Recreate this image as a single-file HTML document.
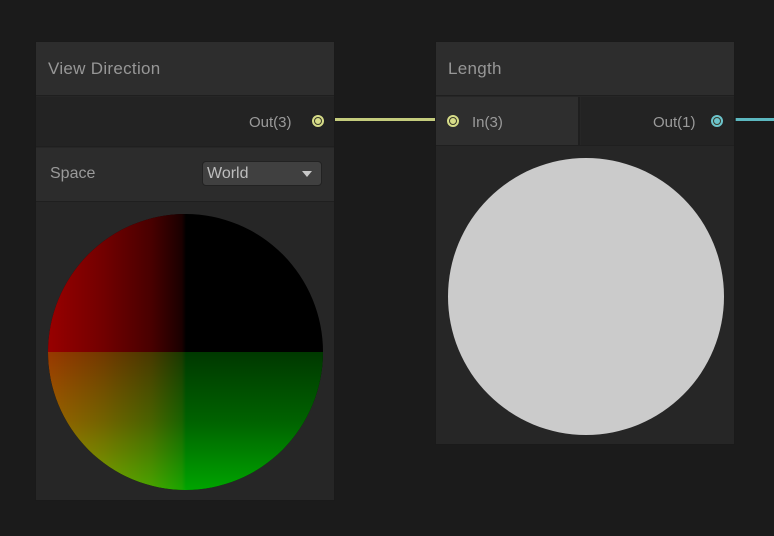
<!DOCTYPE html>
<html><head><style>
*{margin:0;padding:0;box-sizing:border-box}
body{width:774px;height:536px;background:#1b1b1b;position:relative;overflow:hidden;font-family:"Liberation Sans",sans-serif;}
.abs{position:absolute}
.node{position:absolute;background:#262626;border:1px solid #1a1a1a}
.title{position:absolute;left:0;top:0;right:0;height:54px;background:#2d2d2d;border-bottom:1px solid #1f1f1f;color:#979797;font-size:17px;line-height:54px;padding-left:12px;letter-spacing:.3px}
.txt{color:#9a9a9a;font-size:15px;position:absolute}
.port{position:absolute;width:12px;height:12px;border-radius:50%;border:2px solid;}
.port::after{content:"";position:absolute;left:0px;top:0px;width:8px;height:8px;border-radius:50%;border:1.5px solid #3a3a2a;box-sizing:border-box}
</style></head><body>
<!-- wires -->
<div class="abs" style="left:323px;top:118px;width:12px;height:3px;background:#4f5236"></div>
<div class="abs" style="left:335px;top:118px;width:100px;height:3px;background:#c4cc7d"></div>
<div class="abs" style="left:435px;top:118px;width:12px;height:3px;background:#4f5236"></div>
<div class="abs" style="left:722px;top:118px;width:14px;height:3px;background:#2f4a4c"></div>
<div class="abs" style="left:736px;top:118px;width:38px;height:3px;background:#5cb8c0"></div>

<!-- node 1 -->
<div class="node" style="left:35px;top:41px;width:300px;height:460px">
 <div class="title">View Direction</div>
 <div class="abs" style="left:0;top:55px;right:0;height:50px;background:#232323;border-bottom:1px solid #1f1f1f"></div>
 <div class="txt" style="left:213px;top:72px">Out(3)</div>
 <div class="port" style="left:276px;top:73px;border-color:#d6dc88;background:#d6dc88"></div>
 <div class="abs" style="left:0;top:106px;right:0;height:54px;background:#2c2c2c;border-bottom:1px solid #1f1f1f"></div>
 <div class="txt" style="left:14px;top:123px;font-size:16px">Space</div>
 <div class="abs" style="left:166px;top:119px;width:120px;height:25px;background:#404040;border:1px solid #222;border-radius:4px;color:#bdbdbd;font-size:16px;line-height:23px;padding-left:4px">World</div>
 <div class="abs" style="left:266px;top:129px;width:0;height:0;border-left:5px solid transparent;border-right:5px solid transparent;border-top:6px solid #c8c8c8"></div>
 <div class="abs" style="left:12px;top:172px;width:275px;height:276px;border-radius:50%;overflow:hidden;background:#000;isolation:isolate">
  <div class="abs" style="left:0;top:0;width:138px;height:276px;background:linear-gradient(to right,#980000,#720000 40%,#480000 75%,#1a0000 97%,#000)"></div>
  <div class="abs" style="left:0;top:138px;width:275px;height:138px;background:linear-gradient(to bottom,#003800,#006200 50%,#00a400);mix-blend-mode:screen"></div>
 </div>
</div>

<!-- node 2 -->
<div class="node" style="left:435px;top:41px;width:300px;height:404px">
 <div class="title">Length</div>
 <div class="abs" style="left:0;top:55px;width:144px;height:48px;background:#2e2e2e;border-right:2px solid #1f1f1f"></div>
 <div class="abs" style="left:145px;top:55px;right:0;height:48px;background:#232323"></div>
 <div class="abs" style="left:0;top:103px;right:0;height:1px;background:#1f1f1f"></div>
 <div class="port" style="left:11px;top:73px;border-color:#d6dc88;background:#d6dc88"></div>
 <div class="txt" style="left:36px;top:72px">In(3)</div>
 <div class="txt" style="left:217px;top:72px">Out(1)</div>
 <div class="port" style="left:275px;top:73px;border-color:#6cc4cc;background:#6cc4cc"></div>
 <div class="abs" style="left:12px;top:116px;width:276px;height:277px;border-radius:50%;background:#cbcbcb"></div>
</div>
</body></html>
